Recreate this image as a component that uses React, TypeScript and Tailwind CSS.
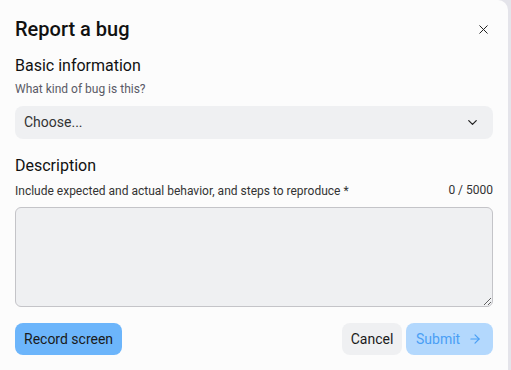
import { X, ChevronDown, ArrowRight } from 'lucide-react';

export default function App() {
  return (
    <div className="flex h-[370px] w-[511px] bg-[#e4e4ea]" style={{ fontFamily: 'Roboto, "Noto Sans", sans-serif' }}>
      <div className="flex flex-1 flex-col rounded-tr-[10px] bg-[#fcfcfc] px-[15px] pt-[15px] text-[#111]">
        {/* Header */}
        <div className="flex items-center justify-between">
          <h1 className="text-[20px] font-medium leading-[28px]">Report a bug</h1>
          <button className="mr-[2px] text-[#222]">
            <X className="h-[15px] w-[15px]" strokeWidth={1.6} />
          </button>
        </div>

        {/* Basic information */}
        <h2 className="mt-[12px] text-[16px] font-normal leading-[22px]">Basic information</h2>
        <p className="mt-[5px] text-[12px] leading-[15px] text-[#5a5a66]">What kind of bug is this?</p>
        <button className="mt-[9px] flex h-[33px] w-full items-center justify-between rounded-[8px] bg-[#eff0f2] pl-[9px] pr-[13px] text-left">
          <span className="text-[14px] text-[#333]">Choose...</span>
          <ChevronDown className="h-[15px] w-[15px] text-[#222]" strokeWidth={2} />
        </button>

        {/* Description */}
        <h2 className="mt-[16px] text-[16px] font-normal leading-[22px]">Description</h2>
        <div className="mt-[6px] flex items-end justify-between">
          <p className="text-[12px] leading-[15px] text-[#333]">
            Include expected and actual behavior, and steps to reproduce *
          </p>
          <span className="mb-[1px] text-[12px] leading-[15px] text-[#333]">0 / 5000</span>
        </div>
        <textarea className="mt-[8px] h-[100px] w-full rounded-[6px] border border-[#c4c4c8] bg-[#eff0f2] outline-none" />

        {/* Footer */}
        <div className="mt-[16px] flex items-center justify-between">
          <button className="h-[32px] rounded-[8px] bg-[#6cb5fb] px-[9px] text-[14px] text-[#1a1a1a]">
            Record screen
          </button>
          <div className="flex gap-[4px]">
            <button className="h-[32px] w-[60px] rounded-[8px] bg-[#eff0f2] text-[14px] text-[#1a1a1a]">
              Cancel
            </button>
            <button className="flex h-[32px] w-[87px] items-center justify-between rounded-[8px] bg-[#b3d8fd] pl-[10px] pr-[11px] text-[14px] text-[#4a9ff5]">
              Submit
              <ArrowRight className="h-[14px] w-[14px]" strokeWidth={2} />
            </button>
          </div>
        </div>
      </div>
      <div className="w-[3px]" />
    </div>
  );
}
